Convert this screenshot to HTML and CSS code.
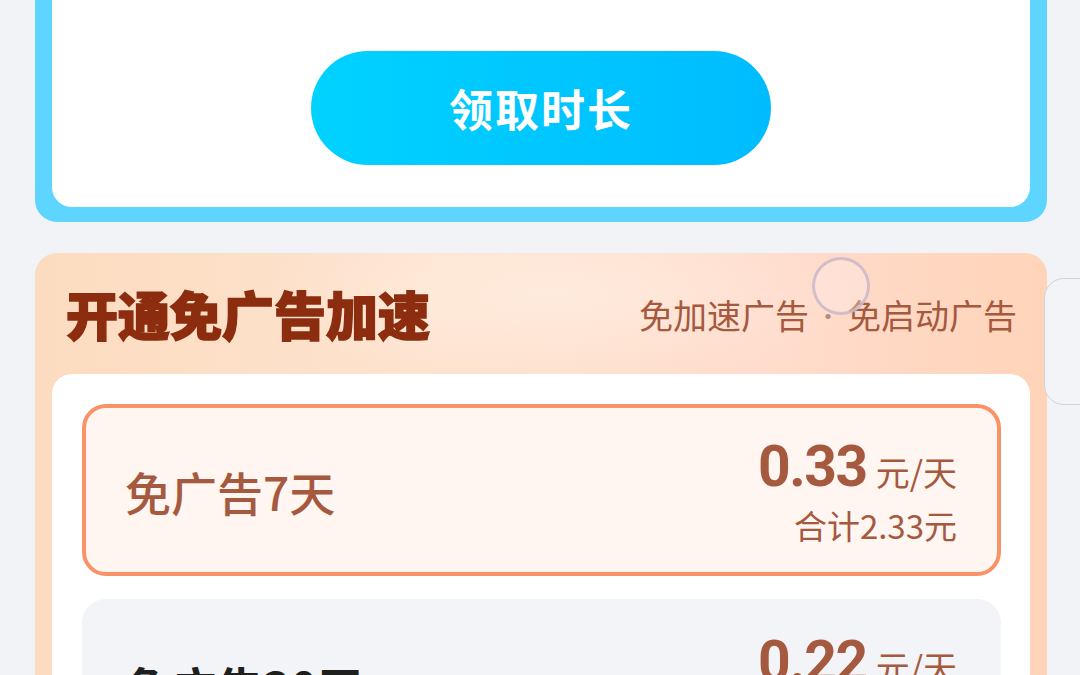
FILE: index.html
```html
<!DOCTYPE html>
<html lang="zh-CN">
<head>
<meta charset="utf-8">
<title>免广告加速</title>
<link rel="stylesheet" href="styles.css">
</head>
<body>
<div class="page">
  <section class="blue-card">
    <div class="blue-inner">
      <button class="claim-btn">领取时长</button>
    </div>
  </section>

  <section class="vip-card">
    <header class="vip-head">
      <h2 class="vip-title">开通免广告加速</h2>
      <div class="vip-sub">免加速广告<span class="dot">·</span>免启动广告</div>
    </header>
    <div class="vip-panel">
      <div class="option selected">
        <div class="opt-name">免广告7天</div>
        <div class="opt-price">
          <div class="price-line"><span class="price-num">0.33</span><span class="price-unit">元/天</span></div>
          <div class="price-total">合计2.33元</div>
        </div>
      </div>
      <div class="option plain">
        <div class="opt-name">免广告30天</div>
        <div class="opt-price">
          <div class="price-line"><span class="price-num">0.22</span><span class="price-unit">元/天</span></div>
          <div class="price-total">合计6.66元</div>
        </div>
      </div>
    </div>
  </section>
</div>
<div class="side-tab"></div>
<div class="touch-dot"></div>
</body>
</html>
```
FILE: styles.css
```css
* { box-sizing: border-box; }
html, body {
  margin: 0;
  padding: 0;
  width: 1080px;
  height: 675px;
  overflow: hidden;
  background: #f2f3f7;
  font-family: "Noto Sans CJK SC", "Noto Sans", sans-serif;
}
.page {
  padding: 0 33px 0 35px;
}
.blue-card {
  background: #5dd5ff;
  padding: 0 17px 15px;
  border-radius: 0 0 22px 22px;
}
.blue-inner {
  background: #ffffff;
  height: 207px;
  border-radius: 0 0 20px 20px;
  display: flex;
  justify-content: center;
  padding-top: 51px;
}
.claim-btn {
  width: 460px;
  height: 114px;
  border: none;
  border-radius: 57px;
  background: linear-gradient(90deg, #00d2ff 0%, #00bcff 100%);
  color: #ffffff;
  font-family: "Noto Sans CJK SC", sans-serif;
  font-size: 44px;
  font-weight: 700;
  letter-spacing: 2px;
  padding: 0;
}
.vip-card {
  margin-top: 31px;
  border-radius: 22px 22px 0 0;
  padding: 0 17px;
  background:
    radial-gradient(ellipse 300px 90px at 520px 40px, rgba(255,240,228,0.7), rgba(255,240,228,0)),
    linear-gradient(90deg, #fcdcc0 0%, #fee3cf 40%, #ffdccd 72%, #ffd4b9 100%);
  height: 440px;
}
.vip-head {
  height: 121px;
  display: flex;
  align-items: center;
  justify-content: space-between;
  padding: 0 13px 0 14px;
}
.vip-title {
  margin: 0;
  font-size: 52px;
  font-weight: 900;
  color: #8c2d0f;
  -webkit-text-stroke: 1.6px #8c2d0f;
  line-height: 1;
}
.vip-sub {
  font-size: 34px;
  color: #a5593f;
  line-height: 1;
  margin-top: 2px;
  display: flex;
  align-items: center;
}
.vip-sub .dot {
  display: inline-block;
  width: 38px;
  text-align: center;
  font-size: 24px;
  color: #b88a78;
}
.vip-panel {
  background: #ffffff;
  border-radius: 20px 20px 0 0;
  padding: 30px 29px 0 30px;
  height: 320px;
}
.option {
  height: 172px;
  border-radius: 24px;
  display: flex;
  align-items: center;
  justify-content: space-between;
  padding: 0 40px 0 39px;
}
.option.selected {
  border: 4px solid #f99267;
  background: #fff5f1;
}
.option.plain {
  margin-top: 23px;
  background: #f3f4f8;
  padding: 0 44px 0 43px;
}
.opt-name {
  font-size: 46px;
  font-weight: 500;
  color: #a5593f;
  margin-top: 2px;
}
.option.plain .opt-name {
  color: #1f1f1f;
  font-weight: 700;
}
.opt-price {
  text-align: right;
  color: #a5593f;
}
.price-line {
  line-height: 62px;
  display: flex;
  align-items: baseline;
  justify-content: flex-end;
}
.price-num {
  font-family: "Roboto", "Liberation Sans", sans-serif;
  font-size: 57px;
  font-weight: 700;
  letter-spacing: -1.5px;
}
.price-unit {
  font-size: 34px;
  margin-left: 9px;
}
.price-total {
  font-size: 33px;
  line-height: 40px;
  margin-top: 2px;
}
.side-tab {
  position: absolute;
  left: 1044px;
  top: 278px;
  width: 60px;
  height: 127px;
  border: 1px solid #d4d4d8;
  border-radius: 20px;
  background: #f3f4f7;
}
.touch-dot {
  position: absolute;
  left: 812px;
  top: 257px;
  width: 58px;
  height: 58px;
  border-radius: 50%;
  border: 3px solid rgba(200, 184, 200, 0.85);
  background: rgba(255, 238, 238, 0.35);
}
```
